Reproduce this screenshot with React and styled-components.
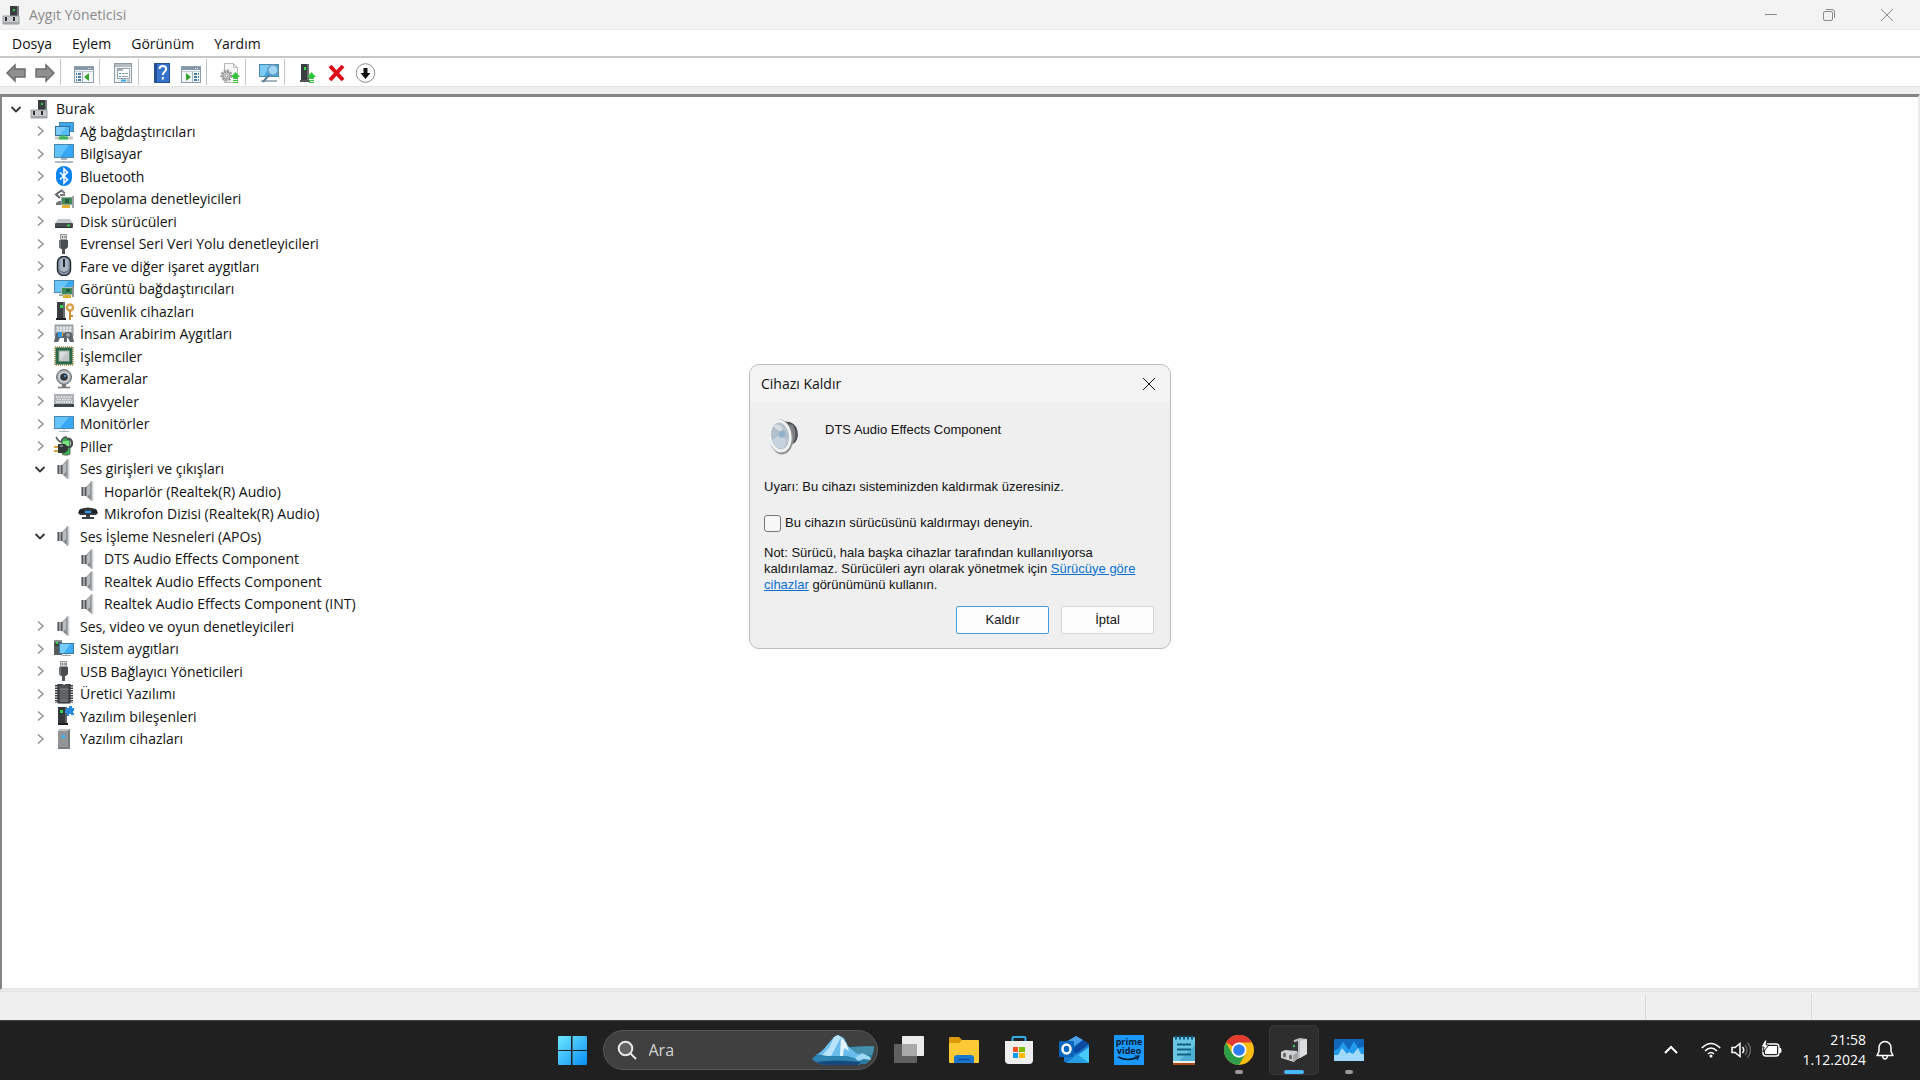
import React, { useState } from "react";
import styled, { createGlobalStyle } from "styled-components";

const icons = {
  root: (
    <>
      <rect x="8" y="1" width="9" height="12" fill="#3a3d40" />
      <rect x="15" y="1" width="2" height="12" fill="#777b7e" />
      <rect x="11" y="4" width="2" height="2" fill="#2fd34a" />
      <path d="M1 11h16v8H1z" fill="#c9cccd" stroke="#9a9d9f" />
      <path d="M1 17h16v2H1z" fill="#a3a6a8" />
      <path d="M3 12h2v4H3zM11 12h2v4h-2z" fill="#2d3032" />
    </>
  ),
  network: (
    <>
      <rect x="5.5" y="1.5" width="14" height="9" fill="#3ba6ee" stroke="#4a87ae" />
      <rect x="1.5" y="5.5" width="14" height="9" fill="#55baf8" stroke="#356f96" />
      <path d="M2 6h10l-6 8H2z" fill="#79ccfb" />
      <path d="M7 14h4v2H7z" fill="#46a75b" />
      <path d="M1 17h18" stroke="#c5cbc8" strokeWidth="3" />
      <path d="M5 17h9" stroke="#3bb856" strokeWidth="3" />
    </>
  ),
  computer: (
    <>
      <rect x=".5" y=".5" width="19" height="13" fill="#36a7f5" stroke="#4c88ad" />
      <path d="M1 1h14L6 13H1z" fill="#62c2fb" />
      <path d="M7 15h6" stroke="#8d9da8" strokeWidth="1.5" />
      <path d="M1 18h18" stroke="#aebac3" strokeWidth="2" />
    </>
  ),
  bluetooth: (
    <>
      <rect x="2" y="0" width="16" height="20" rx="8" fill="#0a84f5" />
      <path d="M6 6.5l7.5 7L10 17V3l3.500 3.500L6 13.500" fill="none" stroke="#fff" strokeWidth="1.6" />
    </>
  ),
  storage: (
    <>
      <path d="M8 1L2 5.500 6 9" fill="none" stroke="#5e6265" strokeWidth="2" />
      <path d="M7 1l4 3.500M6 6h5" stroke="#777b7e" strokeWidth="2" />
      <path d="M2 14l3-2h5v4H2z" fill="#707476" />
      <rect x="7.5" y="8.5" width="11" height="7" fill="#3f8a59" stroke="#97a99d" />
      <rect x="11" y="10" width="4" height="4" fill="#235d3a" />
      <path d="M19 7v12" stroke="#9ea4a7" strokeWidth="2" />
      <path d="M8 16h8v3H8z" fill="#e3ac35" />
    </>
  ),
  disk: (
    <>
      <path d="M4 8h12l3 5H1z" fill="#c3c6c8" />
      <rect x="1" y="12" width="18" height="5" rx="1" fill="#484c4e" />
      <path d="M1 16.500h17" stroke="#2e3133" />
      <circle cx="14.5" cy="14.5" r="1.2" fill="#35df48" />
    </>
  ),
  usb: (
    <>
      <rect x="6.5" y=".5" width="6" height="5" fill="#d7d9da" stroke="#989b9d" />
      <path d="M8 2h1v2H8zM10.500 2h1v2h-1z" fill="#666" />
      <path d="M5 6h9v7l-2 2H7l-2-2z" fill="#4a4d50" />
      <path d="M5 6h2v8l-2-1z" fill="#737679" />
      <path d="M9.500 14v6" stroke="#505356" strokeWidth="3" />
    </>
  ),
  mouse: (
    <>
      <rect x="3.5" y=".5" width="13" height="19" rx="6" fill="#8998aa" stroke="#2a2e33" strokeWidth="1.5" />
      <path d="M6 4v11q4 3 8 0V4q-4-3-8 0z" fill="#a8b5c3" />
      <path d="M10 3v8" stroke="#222a34" strokeWidth="2" />
      <path d="M4 13q6 7 12 0" fill="none" stroke="#57636f" />
    </>
  ),
  display: (
    <>
      <rect x=".5" y="1.5" width="19" height="12" fill="#38a9f4" stroke="#4c88ad" />
      <path d="M1 2h14L6 13H1z" fill="#68c4fa" />
      <path d="M5 16h5" stroke="#9da6ab" strokeWidth="2" />
      <rect x="7.5" y="8.5" width="11" height="7" fill="#3f8a59" stroke="#b0bdb3" />
      <rect x="12" y="10" width="4" height="3" fill="#235d3a" />
      <path d="M19 7v11" stroke="#8f979b" strokeWidth="2" />
      <path d="M9 16h8v3H9z" fill="#e3ac35" />
    </>
  ),
  security: (
    <>
      <path d="M3 1h8v18H3z" fill="#3a3d40" />
      <path d="M9 1h2v18H9z" fill="#686b6e" />
      <path d="M2 17h10v2H2z" fill="#1f2224" />
      <rect x="6" y="4" width="3" height="3" fill="#2fd34a" />
      <circle cx="16" cy="6.5" r="3" fill="none" stroke="#dba14b" strokeWidth="2.5" />
      <path d="M16 9v10M16 15h3" stroke="#c68e38" strokeWidth="2" />
    </>
  ),
  hid: (
    <>
      <path d="M1 1h18v11H1z" fill="#b7bdc1" stroke="#8d9499" />
      <path d="M3 4h14M3 6.500h14" stroke="#f4f6f7" strokeWidth="1.5" strokeDasharray="2 1" />
      <path d="M2 9q4-2 8 0 4-2 8 0l2 9h-4l-2-4h-1v4h-3v-4H6l-2 4H0z" fill="#5d656c" />
      <rect x="4" y="8" width="4" height="5" fill="#2c9cf0" />
      <path d="M8.500 8v4" stroke="#f39c36" />
      <path d="M12 11h4M14 9v4" stroke="#bdc5ca" />
    </>
  ),
  cpu: (
    <>
      <rect x="1" y="1" width="18" height="18" fill="none" stroke="#c6a65d" strokeWidth="2" strokeDasharray="1 1" />
      <rect x="1.5" y="1.5" width="17" height="17" fill="#2e6748" />
      <rect x="5" y="5" width="10" height="10" fill="#d8dcdc" stroke="#94ad9f" />
      <path d="M5 15L15 5v10z" fill="#c0c5c6" />
    </>
  ),
  camera: (
    <>
      <circle cx="10" cy="8" r="7.5" fill="#a5a9ac" stroke="#6e7275" />
      <circle cx="10" cy="8" r="5.5" fill="#d5d8da" />
      <circle cx="10" cy="8" r="3.8" fill="#2f373e" />
      <circle cx="11" cy="7" r="1.2" fill="#4f8fc4" />
      <path d="M8 15h4v3H8z" fill="#787c7f" />
      <path d="M4 18.500h12" stroke="#777" strokeWidth="1.5" />
    </>
  ),
  keyboard: (
    <>
      <path d="M0 3h20v12H0z" fill="#abb1b6" />
      <path d="M2 6h16M3 8.500h14M2 11h16" stroke="#f1f3f4" strokeWidth="1.5" strokeDasharray="1.5 1" />
      <path d="M0 13h20v3H0z" fill="#3e464d" />
    </>
  ),
  monitor: (
    <>
      <rect x=".5" y="2.5" width="19" height="12" fill="#38a8f5" stroke="#4c88ad" />
      <path d="M1 3h14L6 14H1z" fill="#66c4fb" />
      <path d="M10 15v2M5 17.500h10" stroke="#abb8c0" />
    </>
  ),
  battery: (
    <>
      <rect x="8" y="2" width="8" height="17" rx="2" fill="#36b24b" stroke="#5e6f61" />
      <path d="M9 5h6v5H9z" fill="#7ce281" />
      <path d="M2 1q3 5 5 5 1-5 6-5" fill="none" stroke="#50575a" strokeWidth="1.5" />
      <path d="M13 11q6 1 5-5-1-4-5-3" fill="none" stroke="#474d50" strokeWidth="2" />
      <path d="M0 11h5M0 15h5" stroke="#dba53d" strokeWidth="2" />
      <path d="M4 8h7l3 3v3l-3 3H4z" fill="#34393c" />
      <path d="M6 9h3v2H6z" fill="#777d80" />
    </>
  ),
  speaker: (
    <>
      <path d="M3 6h5v9H3z" fill="#54585b" />
      <path d="M3 6h1v9H3zM5 6h2v9H5z" fill="#9da1a3" />
      <path d="M8 6l6-6v20l-6-5z" fill="#85898c" />
      <path d="M9 6l3-3v10l-3 3z" fill="#b9bcbe" />
      <path d="M13.500 .5v19" stroke="#a2a5a7" strokeWidth="2" />
      <path d="M15 .5v19" stroke="#d9dadb" />
    </>
  ),
  mic: (
    <>
      <path d="M2 5q8-3 16 0l2 4-2 2H2L0 9z" fill="#35393c" />
      <path d="M1 6h5v3H1zM14 6h5v3h-5z" fill="#1d2022" />
      <path d="M7 8h6" stroke="#309cf0" strokeWidth="2" />
      <path d="M8 11h4v2h4v2H4v-2h4z" fill="#3c4144" />
    </>
  ),
  system: (
    <>
      <path d="M0 1h8v15H0z" fill="#565b5e" />
      <path d="M0 1h8v2H0z" fill="#8c9194" />
      <path d="M1 6h5" stroke="#202325" />
      <rect x="2" y="3" width="2" height="2" fill="#2fd34a" />
      <rect x="5.5" y="4.5" width="14" height="10" fill="#3bacf5" stroke="#3d7ba4" />
      <path d="M6 5h10l-6 9H6z" fill="#75cdfc" />
      <path d="M12 15v2M8 16.500h9" stroke="#9ba5ab" />
    </>
  ),
  chip: (
    <>
      <path d="M3 1v18M17 1v18" stroke="#3a3e40" strokeWidth="4" strokeDasharray="1.5 1" />
      <path d="M4 0h3q3 3 6 0h3v19H4z" fill="#4b4f51" stroke="#242729" />
      <path d="M6 5h8v12H6z" fill="#5e6264" />
      <path d="M6 5h8M6 17h8" stroke="#858a8c" />
    </>
  ),
  component: (
    <>
      <path d="M4 1h9v18H4z" fill="#34383a" />
      <path d="M11 1h2v18h-2z" fill="#5f6365" />
      <path d="M4 17h10v2H4z" fill="#1f2224" />
      <rect x="6" y="4" width="3" height="3" fill="#2fd34a" />
      <path d="M12 2h3V0h3v2h2v3h-1v2h1v2h-3V8h-2v2h-2V7h-2V4h1z" fill="#2788dc" />
    </>
  ),
  softdevice: (
    <>
      <path d="M4 2l2-2h10v20H4z" fill="#909497" />
      <path d="M4 2l2-2h10l-2 2z" fill="#bec2c4" />
      <path d="M14 2l2-2v18l-2 2z" fill="#777b7e" />
      <circle cx="9.5" cy="7.5" r="1.8" fill="#39b5f9" />
      <path d="M4 18h12v2H4z" fill="#7c8083" />
    </>
  ),
  back: (
    <path d="M1 10l8-8v4h10v8H9v4z" fill="#8f8f8f" stroke="#6d6d6d" strokeWidth="1.5" />
  ),
  forward: (
    <path d="M19 10l-8-8v4H1v8h10v4z" fill="#8f8f8f" stroke="#6d6d6d" strokeWidth="1.5" />
  ),
  consoleTree: (
    <>
      <rect x=".5" y="3.5" width="19" height="16" fill="#f4f7f9" stroke="#8c9dab" />
      <path d="M1 4h18v3H1z" fill="#8495a3" />
      <path d="M14 5.500h4" stroke="#e2ebf1" strokeDasharray="1 1" />
      <path d="M1 8.500h18" stroke="#c1cdd5" />
      <path d="M2 11h5M2 14h5M2 17h5" stroke="#477ba8" strokeWidth="2" strokeDasharray="1 1 3" />
      <path d="M8.500 9v10" stroke="#a4b2bc" />
      <path d="M15 10v8l-5-4z" fill="#37a328" />
    </>
  ),
  properties: (
    <>
      <rect x="1.5" y=".5" width="17" height="19" fill="#eef2f4" stroke="#8f9ba4" />
      <path d="M2 2.500h16" stroke="#b4bec5" strokeWidth="3" />
      <rect x="4.5" y="5.5" width="12" height="10" fill="#fff" stroke="#98a3aa" />
      <path d="M5 7h5" stroke="#a7b1b7" strokeWidth="2" />
      <path d="M6 10.500h2M6 13.500h2" stroke="#3799d4" />
      <path d="M9 10.500h6M9 13.500h6" stroke="#929da4" />
      <path d="M8 17.500h5" stroke="#35abe4" strokeWidth="2" />
      <path d="M14 17.500h3" stroke="#b2bbc1" strokeWidth="2" />
    </>
  ),
  help: (
    <>
      <rect x="2.5" y=".5" width="15" height="19" fill="#3673cb" stroke="#28528c" />
      <path d="M3 1h2v18H3z" fill="#234e94" />
      <path d="M7.500 6q0-3 3.300-3t3.300 3c0 3-3.300 2.500-3.300 6" fill="none" stroke="#fff" strokeWidth="2" />
      <rect x="9.8" y="14" width="2" height="2.5" fill="#fff" />
    </>
  ),
  actionPane: (
    <>
      <rect x=".5" y="3.5" width="19" height="16" fill="#f4f7f9" stroke="#8c9dab" />
      <path d="M1 4h18v3H1z" fill="#8495a3" />
      <path d="M14 5.500h4" stroke="#e2ebf1" strokeDasharray="1 1" />
      <path d="M1 8.500h18" stroke="#c1cdd5" />
      <path d="M13 11h5M13 14h5M13 17h5" stroke="#477ba8" strokeWidth="2" strokeDasharray="3 1 1" />
      <path d="M11.500 9v10" stroke="#a4b2bc" />
      <path d="M5 10v8l5-4z" fill="#37a328" />
    </>
  ),
  update: (
    <>
      <path d="M4.500.5h9l4 4v15h-13z" fill="#f6f6f6" stroke="#b7b7b7" />
      <path d="M13.500.5v4h4" fill="none" stroke="#b7b7b7" />
      <circle cx="6.5" cy="12.5" r="4.5" fill="#ddd" stroke="#999" strokeWidth="3" strokeDasharray="2 1" />
      <circle cx="6.5" cy="12.5" r="3.5" fill="#d6d6d6" stroke="#999" />
      <circle cx="6.5" cy="12.5" r="1.5" fill="#fff" stroke="#888" />
      <path d="M15.500 9l4.500 5h-2v2h-5v-2h-2z" fill="#35c43b" />
      <path d="M13 17.500h5M13 19.500h5" stroke="#35c43b" />
    </>
  ),
  scan: (
    <>
      <rect x=".5" y="1.5" width="19" height="12" fill="#43a9e8" stroke="#4b88ad" />
      <path d="M1 2h10L5 13H1z" fill="#7bcaf4" />
      <path d="M2 18h16" stroke="#a6b4bd" strokeWidth="2" />
      <path d="M10 12l-6 7" stroke="#577d99" strokeWidth="2" />
      <circle cx="14" cy="7" r="5" fill="#b9e0f6" fillOpacity=".8" stroke="#6c9ebd" strokeWidth="1.5" />
    </>
  ),
  enable: (
    <>
      <path d="M3 1h8v18H3z" fill="#393d3f" />
      <path d="M9 1h2v18H9z" fill="#686c6e" />
      <path d="M2 17h10v2H2z" fill="#515557" />
      <rect x="6" y="4" width="2" height="3" fill="#35df48" />
      <path d="M13.500 9l4.500 5h-2v2h-5v-2H9z" fill="#35c43b" />
      <path d="M11 17.500h5M11 19.500h5" stroke="#35c43b" />
    </>
  ),
  remove: <path d="M3 3l13 14M16 3L3 17" stroke="#dc0b18" strokeWidth="4" />,
  disable: (
    <>
      <circle cx="9.5" cy="10" r="9.3" fill="#fff" stroke="#8c8c8c" />
      <path d="M7.500 5h4v5h3l-5 6-5-6h3z" fill="#111" />
    </>
  ),
  down: <path d="M5.500 8l4.500 4.500L14.500 8" fill="none" stroke="#333" strokeWidth="1.8" />,
  right: <path d="M8 5.500l5 4.500-5 4.500" fill="none" stroke="#939393" strokeWidth="1.5" />,
};

const toolbarItems = [
  { icon: "back", label: "Geri" },
  { icon: "forward", label: "İleri" },
  null,
  { icon: "consoleTree", label: "Konsol ağacı" },
  null,
  { icon: "properties", label: "Özellikler" },
  null,
  { icon: "help", label: "Yardım" },
  { icon: "actionPane", label: "Eylem bölmesi" },
  null,
  { icon: "update", label: "Sürücüyü güncelleştir" },
  null,
  { icon: "scan", label: "Donanım değişikliklerini tara" },
  null,
  { icon: "enable", label: "Cihazı etkinleştir" },
  { icon: "remove", label: "Cihazı kaldır" },
  { icon: "disable", label: "Cihazı devre dışı bırak" },
];

const devices = [
  { level: 0, icon: "root", name: "Burak", open: true },
  { level: 1, icon: "network", name: "Ağ bağdaştırıcıları" },
  { level: 1, icon: "computer", name: "Bilgisayar" },
  { level: 1, icon: "bluetooth", name: "Bluetooth" },
  { level: 1, icon: "storage", name: "Depolama denetleyicileri" },
  { level: 1, icon: "disk", name: "Disk sürücüleri" },
  { level: 1, icon: "usb", name: "Evrensel Seri Veri Yolu denetleyicileri" },
  { level: 1, icon: "mouse", name: "Fare ve diğer işaret aygıtları" },
  { level: 1, icon: "display", name: "Görüntü bağdaştırıcıları" },
  { level: 1, icon: "security", name: "Güvenlik cihazları" },
  { level: 1, icon: "hid", name: "İnsan Arabirim Aygıtları" },
  { level: 1, icon: "cpu", name: "İşlemciler" },
  { level: 1, icon: "camera", name: "Kameralar" },
  { level: 1, icon: "keyboard", name: "Klavyeler" },
  { level: 1, icon: "monitor", name: "Monitörler" },
  { level: 1, icon: "battery", name: "Piller" },
  { level: 1, icon: "speaker", name: "Ses girişleri ve çıkışları", open: true },
  { level: 2, icon: "speaker", name: "Hoparlör (Realtek(R) Audio)" },
  { level: 2, icon: "mic", name: "Mikrofon Dizisi (Realtek(R) Audio)" },
  { level: 1, icon: "speaker", name: "Ses İşleme Nesneleri (APOs)", open: true },
  { level: 2, icon: "speaker", name: "DTS Audio Effects Component" },
  { level: 2, icon: "speaker", name: "Realtek Audio Effects Component" },
  { level: 2, icon: "speaker", name: "Realtek Audio Effects Component (INT)" },
  { level: 1, icon: "speaker", name: "Ses, video ve oyun denetleyicileri" },
  { level: 1, icon: "system", name: "Sistem aygıtları" },
  { level: 1, icon: "usb", name: "USB Bağlayıcı Yöneticileri" },
  { level: 1, icon: "chip", name: "Üretici Yazılımı" },
  { level: 1, icon: "component", name: "Yazılım bileşenleri" },
  { level: 1, icon: "softdevice", name: "Yazılım cihazları" },
];

// taskbar icons share a 30x30 canvas
const apps = [
  {
    name: "Görev görünümü",
    art: (
      <>
        <rect x="8" y="1" width="22" height="20" rx="1" fill="#ececec" />
        <rect x="0" y="9" width="23" height="19" rx="1" fill="#606060" />
        <path d="M8 9h15v12H8z" fill="#a9a9a9" />
      </>
    ),
  },
  {
    name: "Dosya Gezgini",
    art: (
      <>
        <path d="M0 3q0-1 1-1h9l3 3v5H0z" fill="#dc9a08" />
        <path d="M0 8h10l3-3h16q1 0 1 1v21q0 1-1 1H1q-1 0-1-1z" fill="#fdc934" />
        <path d="M5 28v-5q0-3 3-3h14q3 0 3 3v5z" fill="#1876cf" />
        <path d="M9 24.500h12" stroke="#0c519c" strokeWidth="1.5" />
      </>
    ),
  },
  {
    name: "Microsoft Store",
    art: (
      <>
        <path d="M8.500 7V3q0-1 1-1h11q1 0 1 1v4" fill="none" stroke="#35ace8" strokeWidth="2" />
        <path d="M1 6h28v19q0 4-4 4H5q-4 0-4-4z" fill="#efefef" />
        <path d="M9 12h5v5H9z" fill="#f25022" />
        <path d="M15 12h6v5h-6z" fill="#7fba00" />
        <path d="M9 18h5v5H9z" fill="#0a9bed" />
        <path d="M15 18h6v5h-6z" fill="#ffb900" />
      </>
    ),
  },
  {
    name: "Outlook",
    art: (
      <>
        <path d="M5 8L17 1l13 8v18q0 1-1 1H9q-4 0-4-3z" fill="#1c7bd0" />
        <path d="M6 8l11-7 7 4-14 9z" fill="#4aa1e8" />
        <path d="M13 14L24 5l6 4-13 10z" fill="#0b4aa3" />
        <path d="M8 28l22-16v15q0 1-1 1z" fill="#46cbfa" />
        <path d="M8 28l10-9 12 9z" fill="#259ee2" />
        <rect x="0" y="6" width="15" height="16" rx="1" fill="#0867bd" />
        <ellipse cx="7.5" cy="14" rx="4" ry="4.5" fill="none" stroke="#fff" strokeWidth="2.5" />
      </>
    ),
  },
  {
    name: "Prime Video",
    art: (
      <>
        <path d="M0 0h30v30H0z" fill="#1a98ff" />
        <text x="15" y="10" textAnchor="middle" fontFamily="Open Sans" fontWeight="700" fontSize="9" fill="#071b2f">
          prime
        </text>
        <text x="15" y="19" textAnchor="middle" fontFamily="Open Sans" fontWeight="700" fontSize="9" fill="#071b2f">
          video
        </text>
        <path d="M4 22q10 5 20 0" fill="none" stroke="#071b2f" strokeWidth="1.5" />
        <path d="M21 21h4l-2 4" fill="none" stroke="#071b2f" strokeWidth="1.2" />
      </>
    ),
  },
  {
    name: "Not Defteri",
    art: (
      <>
        <path d="M4 3q0-1 1-1h20q1 0 1 1v25H4z" fill="#69c5e2" />
        <path d="M26 10v18H8z" fill="#4daed3" />
        <path d="M4 26h22v2H4z" fill="#f1eee9" />
        <path d="M4 28h22v2H4z" fill="#a54a1b" />
        <path d="M6 2.500h19" stroke="#0d587d" strokeWidth="4" strokeDasharray="2 2" />
        <path d="M8 9.500h14M8 14.500h14M8 19.500h14" stroke="#12607f" strokeWidth="2" />
      </>
    ),
  },
  {
    name: "Chrome",
    running: "idle",
    art: (
      <>
        <circle cx="15" cy="15" r="15" fill="#fbbc13" />
        <path d="M15 15L2 7.500A15 15 0 0128 7.500H15z" fill="#e53a31" />
        <path d="M2 7.500A15 15 0 0015 30l6.500-11.200L15 22.500 8.500 18.800z" fill="#2f9e49" />
        <circle cx="15" cy="15" r="7.5" fill="#fff" />
        <circle cx="15" cy="15" r="5.8" fill="#2f7ef0" />
      </>
    ),
  },
  {
    name: "Aygıt Yöneticisi",
    running: "active",
    art: (
      <>
        <path d="M15 5l6-2 7 1v15l-9 5-6-5z" fill="#bfc1c2" />
        <path d="M21 6l7-2v15l-7 4z" fill="#dcddde" />
        <path d="M12 8l7-2v11h-7z" fill="#35383a" />
        <rect x="14" y="10" width="2" height="2" fill="#34d54c" />
        <path d="M2 17l4-2 12 1 1 7-4 4-13-4z" fill="#d0d1d2" />
        <path d="M14 20l5-3v6l-5 4z" fill="#a2a4a5" />
        <ellipse cx="5.5" cy="20" rx="1.5" ry="2.5" fill="#616466" />
        <ellipse cx="11.5" cy="22" rx="1.5" ry="2.5" fill="#616466" />
      </>
    ),
  },
  {
    name: "Görev Yöneticisi",
    running: "idle",
    art: (
      <>
        <path d="M0 5q0-1 1-1h28q1 0 1 1v21H0z" fill="#1168ba" />
        <path d="M0 16l5-3 4-6 6 8 5-9 4 7 6-1v14H0z" fill="#239bed" />
        <path d="M0 20h4l4-7 5 6 2-2 4 2 5-6 3 6h3v7H0z" fill="#9fd9fb" />
      </>
    ),
  },
];

function Icon({ name, size = 20 }) {
  return (
    <svg width={size} height={size} viewBox="0 0 20 20" aria-hidden="true">
      {icons[name]}
    </svg>
  );
}

function DeviceTree() {
  return (
    <Tree role="tree">
      {devices.map((device, i) => (
        <DeviceRow key={i} role="treeitem" aria-level={device.level + 1} $level={device.level}>
          <Toggle>{device.level < 2 && <Icon name={device.open ? "down" : "right"} />}</Toggle>
          <Icon name={device.icon} />
          <span>{device.name}</span>
        </DeviceRow>
      ))}
    </Tree>
  );
}

function UninstallDialog() {
  const [removeDriver, setRemoveDriver] = useState(false);

  return (
    <Overlay>
      <Dialog role="dialog" aria-labelledby="dialog-title">
        <DialogHeader>
          <h2 id="dialog-title">Cihazı Kaldır</h2>
          <CloseButton aria-label="Kapat">
            <svg width="14" height="14" viewBox="0 0 14 14" stroke="#111">
              <path d="M1 1l12 12M13 1L1 13" />
            </svg>
          </CloseButton>
        </DialogHeader>
        <DialogBody>
          <DeviceSummary>
            <svg width="36" height="38" viewBox="0 0 36 38">
              <path d="M14 3l12 1q8 3 8 13-1 9-7 9l-9 8z" fill="#505254" />
              <path d="M25 6q5 11 0 20l4-1q5-8 0-18z" fill="#7d8082" />
              <ellipse cx="17" cy="19" rx="12" ry="17.5" fill="#8f9294" transform="rotate(-8 17 19)" />
              <ellipse cx="16" cy="18" rx="11.5" ry="16.5" fill="#f0f1f1" transform="rotate(-8 16 18)" />
              <ellipse cx="16" cy="18" rx="9" ry="13.5" fill="#b4c0cb" transform="rotate(-8 16 18)" />
              <path d="M9 8q5-4 10 2l-2 5z" fill="#d7dde2" />
              <path d="M8 22l9-6 6 7q-2 7-6 8-7-2-9-9z" fill="#c5d1dc" />
              <circle cx="18" cy="16" r="3.5" fill="#91b0ca" />
            </svg>
            <p>DTS Audio Effects Component</p>
          </DeviceSummary>
          <Warning>Uyarı: Bu cihazı sisteminizden kaldırmak üzeresiniz.</Warning>
          <CheckLabel>
            <Checkbox
              type="checkbox"
              checked={removeDriver}
              onChange={(e) => setRemoveDriver(e.target.checked)}
            />
            Bu cihazın sürücüsünü kaldırmayı deneyin.
          </CheckLabel>
          <Note>
            Not: Sürücü, hala başka cihazlar tarafından kullanılıyorsa kaldırılamaz. Sürücüleri ayrı
            olarak yönetmek için <a href="#">Sürücüye göre cihazlar</a> görünümünü kullanın.
          </Note>
          <Actions>
            <ActionButton $primary>Kaldır</ActionButton>
            <ActionButton>İptal</ActionButton>
          </Actions>
        </DialogBody>
      </Dialog>
    </Overlay>
  );
}

function Taskbar() {
  return (
    <Bar>
      <Apps>
        <AppButton aria-label="Başlat">
          <svg width="30" height="30" viewBox="0 0 30 30">
            <defs>
              <linearGradient id="start" x1="0" y1="0" x2="1" y2="1">
                <stop offset="0" stopColor="#6ee9ff" />
                <stop offset="1" stopColor="#0a8cf4" />
              </linearGradient>
            </defs>
            <path d="M1 2q0-1 1-1h12v14H1zM15 1h14q1 0 1 1v13H15zM1 16h13v14H2q-1 0-1-1zM15 16h15v13q0 1-1 1H15z" fill="url(#start)" />
            <path d="M15 0v30M0 15.500h30" stroke="#202020" />
          </svg>
        </AppButton>
        <Search>
          <svg width="20" height="20" viewBox="0 0 20 20" fill="none" stroke="#e8e8e8" strokeWidth="2">
            <circle cx="8.500" cy="8.500" r="6.8" fill="#626262" />
            <path d="M13.500 13.500L19 19" />
          </svg>
          <input aria-label="Ara" placeholder="Ara" />
          <svg width="62" height="32" viewBox="0 0 62 32">
            <path d="M34 13l28-1q0 12-8 18H20z" fill="#2c7c9f" />
            <path d="M40 13l22-1q0 5-2 9H38z" fill="#438fac" />
            <path d="M4 21q7-4 11-10L22 3l4-2 6 3 4 8 8 7 8 3-12 5H10z" fill="#69bcec" />
            <path d="M22 3l4-2 3 2-4 8-6 11H9l8-8z" fill="#b9e4fb" />
            <path d="M29 3l5 6 3 8-5-3-1 8-3 1z" fill="#e4f5fe" />
            <path d="M0 25l5-5 10 2h20l15 4-2 5H14Q4 30 0 25z" fill="#2e84b0" />
            <path d="M4 28q20-3 45 0l-3 3H16Q8 31 4 28z" fill="#154a7d" />
            <path d="M43 24l7-5 8 4 1 3-7-1-6 2z" fill="#9fd8f7" />
          </svg>
        </Search>
        {apps.map((app) => (
          <AppButton key={app.name} aria-label={app.name} $active={app.running === "active"}>
            <svg width="30" height="30" viewBox="0 0 30 30">
              {app.art}
            </svg>
            {app.running && <Indicator $active={app.running === "active"} />}
          </AppButton>
        ))}
      </Apps>
      <Tray>
        <TrayButton aria-label="Gizli simgeleri göster">
          <svg width="14" height="20" viewBox="0 0 14 20" fill="none" stroke="#fff" strokeWidth="2">
            <path d="M1 13l6-6 6 6" />
          </svg>
        </TrayButton>
        <StatusButton aria-label="Ağ, ses ve pil">
          <svg width="20" height="20" viewBox="0 0 20 20" fill="none" stroke="#fff" strokeWidth="1.6">
            <path d="M.8 8q9.200-9 18.400 0M4 11q6-6 12 0M7 14q3-3 6 0" />
            <circle cx="10" cy="16" r="1.5" fill="#fff" stroke="none" />
          </svg>
          <svg width="20" height="20" viewBox="0 0 20 20" fill="none" stroke="#fff" strokeWidth="1.5">
            <path d="M1 7.500h3l5-4v13l-5-4H1z" />
            <path d="M11.500 7q2.500 3 0 6" />
            <path d="M14 5q4 5 0 10M16.500 2.500q6 7.500 0 15" stroke="#606060" />
          </svg>
          <svg width="21" height="20" viewBox="0 0 21 20">
            <rect x="2" y="4" width="16" height="12" rx="3" fill="none" stroke="#fff" strokeWidth="1.5" />
            <path d="M6 6h10v8H4v-3z" fill="#fff" />
            <path d="M18 8h1.500q1 0 1 2.500t-1 2.500H18z" fill="#fff" />
            <path d="M4 0L0 7h3l-1 5 6-7H5l1-5z" fill="#fff" stroke="#202020" />
          </svg>
        </StatusButton>
        <Clock>
          <span>21:58</span>
          <span>1.12.2024</span>
        </Clock>
        <TrayButton aria-label="Bildirimler">
          <svg width="18" height="20" viewBox="0 0 18 20" fill="none" stroke="#fff" strokeWidth="1.5">
            <path d="M1 15.500l2-4V7.500a6 6 0 0112 0v4l2 4z" strokeLinejoin="round" />
            <path d="M6.500 16q.5 3 2.500 3t2.500-3" />
          </svg>
        </TrayButton>
      </Tray>
    </Bar>
  );
}

export default function App() {
  return (
    <>
      <GlobalStyle />
      <Desktop>
        <Window>
          <TitleBar>
            <Icon name="root" />
            <h1>Aygıt Yöneticisi</h1>
            <WindowButton aria-label="Simge durumuna küçült">
              <svg width="14" height="14" viewBox="0 0 14 14" stroke="#8a8a8a">
                <path d="M1 6.500h12" />
              </svg>
            </WindowButton>
            <WindowButton aria-label="Geri yükle">
              <svg width="14" height="14" viewBox="0 0 14 14" fill="none" stroke="#8a8a8a">
                <rect x="1.5" y="3.5" width="9" height="9" rx="1.5" />
                <path d="M4 1.500h6q2.500 0 2.500 2.500v6" />
              </svg>
            </WindowButton>
            <WindowButton aria-label="Kapat">
              <svg width="14" height="14" viewBox="0 0 14 14" stroke="#8a8a8a">
                <path d="M1 1l12 12M13 1L1 13" />
              </svg>
            </WindowButton>
          </TitleBar>
          <MenuBar>
            <button>Dosya</button>
            <button>Eylem</button>
            <button>Görünüm</button>
            <button>Yardım</button>
          </MenuBar>
          <Toolbar>
            {toolbarItems.map((item, i) =>
              item ? (
                <ToolButton key={i} aria-label={item.label}>
                  <Icon name={item.icon} />
                </ToolButton>
              ) : (
                <Separator key={i} />
              )
            )}
          </Toolbar>
          <DeviceTree />
          <StatusBar>
            <StatusPane />
            <StatusPane $width="166px" />
            <StatusPane $width="109px" />
          </StatusBar>
          <UninstallDialog />
        </Window>
        <Taskbar />
      </Desktop>
    </>
  );
}

const GlobalStyle = createGlobalStyle`
  * {
    box-sizing: border-box;
    margin: 0;
    padding: 0;
  }

  body {
    font-family: "Open Sans", "Noto Sans", sans-serif;
    font-size: 14px;
    color: #111;
  }

  button,
  input {
    font: inherit;
    color: inherit;
    background: none;
    border: none;
  }

  svg {
    display: block;
    flex-shrink: 0;
  }
`;

const Desktop = styled.div`
  min-height: 100vh;
  display: flex;
  flex-direction: column;
`;

const Window = styled.main`
  position: relative;
  flex: 1;
  display: flex;
  flex-direction: column;
  background: #efefef;
`;

const TitleBar = styled.header`
  display: flex;
  align-items: center;
  height: 30px;
  padding: 0 4px 0 2px;
  background: #f3f3f3;
  border-bottom: 1px solid #ebebeb;

  h1 {
    flex: 1;
    padding-left: 7px;
    font-size: 14px;
    font-weight: 400;
    color: #8a8a8a;
  }
`;

const WindowButton = styled.button`
  display: flex;
  align-items: center;
  justify-content: center;
  width: 58px;
  height: 28px;
`;

const MenuBar = styled.nav`
  display: flex;
  align-items: center;
  gap: 20px;
  height: 28px;
  padding: 0 12px;
  background: #fff;
  border-bottom: 2px solid #c8c8c8;
`;

const Toolbar = styled.div`
  display: flex;
  align-items: center;
  height: 29px;
  background: #fff;
  border-bottom: 1px solid #e2e2e2;
`;

const ToolButton = styled.button`
  display: flex;
  align-items: center;
  justify-content: center;
  width: 29px;
  height: 28px;
  padding: 2px 0 0 2px;
`;

const Separator = styled.span`
  width: 1px;
  height: 26px;
  margin: 0 7px 0 2px;
  background: #c4c4c4;
`;

const Tree = styled.ul`
  flex: 1;
  margin-top: 7px;
  padding-left: 2px;
  list-style: none;
  background: #fff;
  border-top: 3px solid #858585;
  border-left: 2px solid #858585;
  border-right: 2px solid #ebebeb;
  border-bottom: 2px solid #e6e6e6;
`;

const DeviceRow = styled.li`
  display: flex;
  align-items: center;
  height: 23px;
  padding-left: ${({ $level }) => $level * 24}px;
  white-space: nowrap;

  &:nth-child(even) {
    height: 22px;
  }

  > span:last-child {
    margin-left: 6px;
  }
`;

const Toggle = styled.span`
  display: flex;
  justify-content: center;
  width: 24px;
  margin-right: 2px;
`;

const StatusBar = styled.footer`
  display: flex;
  height: 29px;
  margin-top: 1px;
  padding-top: 2px;
  border-top: 1px solid #e0e0e0;
`;

const StatusPane = styled.div`
  flex: ${({ $width }) => ($width ? `0 0 ${$width}` : 1)};
  border-left: ${({ $width }) => ($width ? "1px solid #d9d9d9" : "none")};
`;

const Overlay = styled.div`
  position: absolute;
  inset: 0;
  display: flex;
  align-items: center;
  justify-content: center;
  padding-bottom: 8px;
`;

const Dialog = styled.section`
  width: 422px;
  background: #efefef;
  border: 1px solid #bdbdbd;
  border-radius: 10px;
  overflow: hidden;
`;

const DialogHeader = styled.header`
  display: flex;
  align-items: center;
  justify-content: space-between;
  height: 38px;
  padding: 0 14px 0 11px;
  background: #f3f3f3;

  h2 {
    font-size: 14px;
    font-weight: 400;
  }
`;

const CloseButton = styled.button`
  padding: 0;
`;

const DialogBody = styled.div`
  display: flex;
  flex-direction: column;
  padding: 15px 16px 14px 14px;
  font-family: "Liberation Sans", Arial, sans-serif;
  font-size: 13px;
  line-height: 16px;
`;

const DeviceSummary = styled.div`
  display: flex;
  gap: 25px;

  p {
    padding-top: 4px;
  }
`;

const Warning = styled.p`
  margin-top: 23px;
`;

const CheckLabel = styled.label`
  display: flex;
  align-items: center;
  gap: 4px;
  margin-top: 20px;
`;

const Checkbox = styled.input`
  appearance: none;
  width: 17px;
  height: 17px;
  background: #f7f7f7;
  border: 1px solid #777;
  border-radius: 3px;

  &:checked {
    background: #0067c0;
  }
`;

const Note = styled.p`
  margin-top: 13px;

  a {
    color: #0a6fd0;
  }
`;

const Actions = styled.div`
  display: flex;
  justify-content: flex-end;
  gap: 12px;
  margin-top: 13px;
`;

const ActionButton = styled.button`
  width: 93px;
  height: 28px;
  background: #fdfdfd;
  border: 1px solid ${({ $primary }) => ($primary ? "#4a9bdc" : "#d6d6d6")};
  border-radius: 2px;
`;

const Bar = styled.footer`
  display: grid;
  grid-template-columns: 1fr auto 1fr;
  align-items: center;
  height: 60px;
  padding-bottom: 2px;
  background: #202020;
  border-top: 1px solid #404040;
  color: #fff;
`;

const Apps = styled.div`
  grid-column: 2;
  display: flex;
  align-items: center;
  gap: 5px;
`;

const AppButton = styled.button`
  position: relative;
  display: flex;
  align-items: center;
  justify-content: center;
  width: 50px;
  height: 50px;
  border: 1px solid ${({ $active }) => ($active ? "#383838" : "transparent")};
  border-radius: 5px;
  background: ${({ $active }) => ($active ? "#2e2e2e" : "none")};
`;

const Indicator = styled.span`
  position: absolute;
  bottom: 0;
  width: ${({ $active }) => ($active ? 20 : 8)}px;
  height: 4px;
  border-radius: 2px;
  background: ${({ $active }) => ($active ? "#48b8f8" : "#999")};
`;

const Search = styled.label`
  display: flex;
  align-items: center;
  width: 275px;
  height: 40px;
  margin: 0 1px;
  padding: 0 3px 0 13px;
  background: #404040;
  border: 1px solid #565656;
  border-radius: 20px;

  input {
    flex: 1;
    min-width: 0;
    margin-left: 12px;
    font-size: 16px;
    outline: none;

    &::placeholder {
      color: #d4d4d4;
      opacity: 1;
    }
  }
`;

const Tray = styled.div`
  display: flex;
  align-items: center;
  justify-content: flex-end;
  padding-right: 26px;
`;

const TrayButton = styled.button`
  display: flex;
  align-items: center;
`;

const StatusButton = styled.button`
  display: flex;
  align-items: center;
  gap: 10px;
  margin: 0 21px 0 23px;
`;

const Clock = styled.time`
  display: flex;
  flex-direction: column;
  align-items: flex-end;
  margin-right: 10px;
  line-height: 20px;
`;
